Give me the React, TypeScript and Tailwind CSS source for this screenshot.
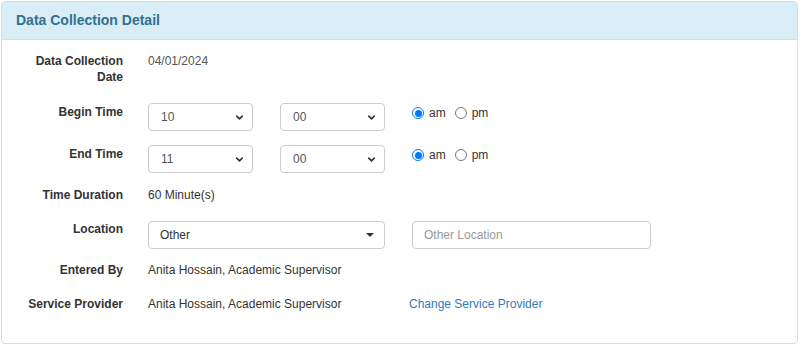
import { ChevronDown } from "lucide-react"

const font = { fontFamily: '"Liberation Sans", Arial, sans-serif' }

const TimeSelect = ({ value }: { value: string }) => (
  <div className="w-[105px] h-[28px] border border-[#ccc] rounded-[4px] bg-white flex items-center justify-between pl-[12px] pr-[7px] text-[12px] text-[#555]">
    <span>{value}</span>
    <ChevronDown size={11} strokeWidth={3.5} className="text-[#333]" />
  </div>
)

const AmPm = () => (
  <div className="flex items-center h-[18px] text-[12px] text-[#333] ml-[27px] mt-[1px]">
    <span className="w-[12px] h-[12px] rounded-full border border-[#0075ff] bg-white flex items-center justify-center mr-[5px]">
      <span className="w-[7px] h-[7px] rounded-full bg-[#0075ff]" />
    </span>
    <span>am</span>
    <span className="w-[12px] h-[12px] rounded-full border border-[#767676] bg-white ml-[9px] mr-[5px]" />
    <span>pm</span>
  </div>
)

const Label = ({ children }: { children: React.ReactNode }) => (
  <div className="w-[121px] shrink-0 text-right font-bold text-[12px] leading-[16px] text-[#333]">{children}</div>
)

export default function App() {
  const rows = "flex items-start"
  return (
    <div style={font} className="bg-white w-[800px] h-[347px] pl-[1px] pt-[1px] pr-[2px]">
      <div className="border border-[#bce8f1] rounded-[4px] h-[343px] overflow-hidden">
        <div className="bg-[#d9edf7] border-b border-[#bce8f1] h-[38px] flex items-center pl-[14px]">
          <h3 className="text-[14px] font-bold text-[#31708f]">Data Collection Detail</h3>
        </div>

        <div className="pt-[13px]">
          <div className={rows}>
            <Label>Data Collection<br />Date</Label>
            <div className="ml-[25px] text-[12px] leading-[16px] text-[#555]">04/01/2024</div>
          </div>

          <div className={`${rows} mt-[18px]`}>
            <div className="pt-[1px]"><Label>Begin Time</Label></div>
            <div className="ml-[25px] flex items-start gap-[27px]">
              <TimeSelect value="10" />
              <TimeSelect value="00" />
            </div>
            <AmPm />
          </div>

          <div className={`${rows} mt-[14px]`}>
            <div className="pt-[1px]"><Label>End Time</Label></div>
            <div className="ml-[25px] flex items-start gap-[27px]">
              <TimeSelect value="11" />
              <TimeSelect value="00" />
            </div>
            <AmPm />
          </div>

          <div className={`${rows} mt-[14px]`}>
            <Label>Time Duration</Label>
            <div className="ml-[25px] text-[12px] leading-[16px] text-[#333]">60 Minute(s)</div>
          </div>

          <div className={`${rows} mt-[18px]`}>
            <Label>Location</Label>
            <div className="ml-[25px] w-[237px] h-[28px] border border-[#ccc] rounded-[4px] flex items-center justify-between pl-[11px] pr-[10px] text-[12px] text-[#333]">
              <span>Other</span>
              <span className="w-0 h-0 border-l-[4px] border-r-[4px] border-t-[4px] border-l-transparent border-r-transparent border-t-[#333]" />
            </div>
            <div className="ml-[27px] w-[239px] h-[28px] border border-[#ccc] rounded-[4px] flex items-center pl-[11px] text-[12px] text-[#999]">
              Other Location
            </div>
          </div>

          <div className={`${rows} mt-[13px]`}>
            <Label>Entered By</Label>
            <div className="ml-[25px] text-[12px] leading-[16px] text-[#333]">Anita Hossain, Academic Supervisor</div>
          </div>

          <div className={`${rows} mt-[18px]`}>
            <Label>Service Provider</Label>
            <div className="ml-[25px] w-[235px] text-[12px] leading-[16px] text-[#333]">Anita Hossain, Academic Supervisor</div>
            <a className="ml-[26px] text-[12px] leading-[16px] text-[#337ab7]">Change Service Provider</a>
          </div>
        </div>
      </div>
    </div>
  )
}
